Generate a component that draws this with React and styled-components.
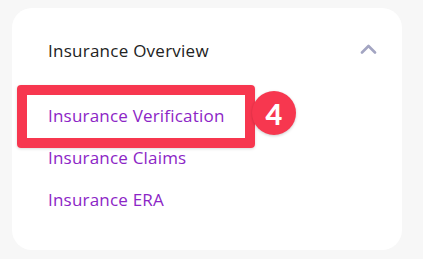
import React from 'react';
import styled, { createGlobalStyle } from 'styled-components';

const GlobalStyle = createGlobalStyle`
  html, body {
    margin: 0;
    padding: 0;
    background: #f7f7f7;
    font-family: "Open Sans", Lato, sans-serif;
  }
`;

const Page = styled.div`
  width: 423px;
  height: 259px;
  padding: 8px 21px 9px 12px;
  box-sizing: border-box;
`;

const Card = styled.div`
  background: #ffffff;
  border-radius: 20px;
  height: 242px;
  box-sizing: border-box;
  padding: 29px 25px 0 36px;
`;

const Header = styled.div`
  display: flex;
  align-items: center;
  justify-content: space-between;
  height: 26px;
`;

const HeaderTitle = styled.span`
  font-size: 17px;
  letter-spacing: 0.25px;
  color: #222222;
`;

const Chevron = styled.svg`
  width: 17px;
  height: 10px;
  margin-top: -2px;
`;

const LinkList = styled.ul`
  list-style: none;
  margin: 42px 0 0;
  padding: 0;
  display: flex;
  flex-direction: column;
  gap: 21px;
`;

const LinkItem = styled.li`
  position: relative;
  font-size: 17px;
  letter-spacing: 0.2px;
  line-height: 21px;
  color: #8c25c6;
`;

const Highlight = styled.div`
  position: absolute;
  left: -31px;
  top: -20px;
  width: 218px;
  height: 43px;
  border: 10px solid #f7374f;
  border-radius: 4px;
  box-shadow: 0 1px 3px rgba(0, 0, 0, 0.15);
`;

const StepBadge = styled.div`
  position: absolute;
  left: 204px;
  top: -14px;
  width: 44px;
  height: 44px;
  border-radius: 50%;
  background: #f7374f;
  color: #ffffff;
  font-family: Lato, sans-serif;
  font-weight: 900;
  font-size: 29px;
  letter-spacing: 0;
  display: flex;
  align-items: center;
  justify-content: center;
  box-shadow: 0 1px 3px rgba(0, 0, 0, 0.2);
`;

const links = ['Insurance Verification', 'Insurance Claims', 'Insurance ERA'];

export default function App() {
  return (
    <>
      <GlobalStyle />
      <Page>
        <Card>
          <Header>
            <HeaderTitle>Insurance Overview</HeaderTitle>
            <Chevron viewBox="0 0 17 10">
              <path d="M2 8.5 L8.5 2 L15 8.5" fill="none" stroke="#a3a5c2" strokeWidth="2.6" strokeLinecap="round" strokeLinejoin="round" />
            </Chevron>
          </Header>
          <LinkList>
            {links.map((label, i) => (
              <LinkItem key={label}>
                {label}
                {i === 0 && (
                  <>
                    <Highlight />
                    <StepBadge>4</StepBadge>
                  </>
                )}
              </LinkItem>
            ))}
          </LinkList>
        </Card>
      </Page>
    </>
  );
}
